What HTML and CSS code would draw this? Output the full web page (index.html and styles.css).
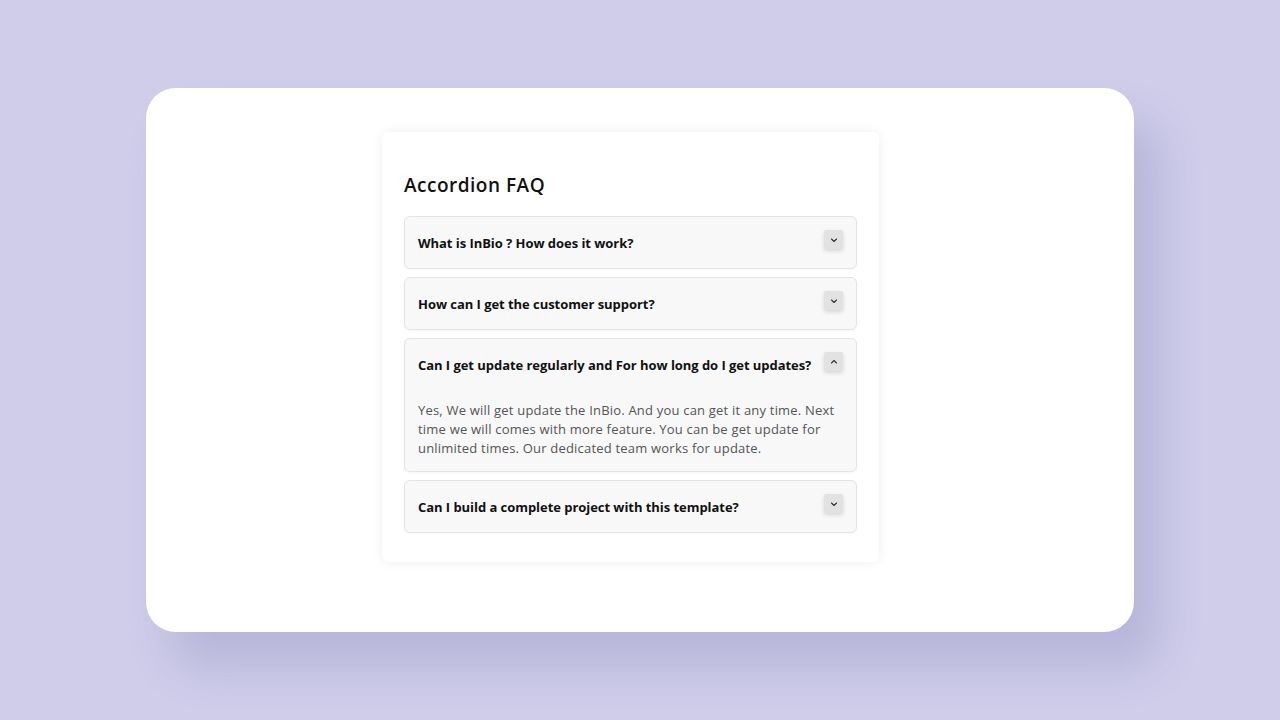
FILE: index.html
```html
<!DOCTYPE html>
<html>
<head>
<meta charset="utf-8">
<link rel="stylesheet" href="styles.css">
</head>
<body>
<div class="frame">
  <div class="faq">
    <h1 class="faq-title">Accordion FAQ</h1>
    <div class="item">
      <div class="item-head">
        <span class="q">What is InBio ? How does it work?</span>
        <span class="toggle"><svg viewBox="0 0 10 10" width="10" height="10"><path d="M2.5 4 L5 6.5 L7.5 4" fill="none" stroke="#333" stroke-width="1.1" stroke-linecap="round" stroke-linejoin="round"/></svg></span>
      </div>
    </div>
    <div class="item">
      <div class="item-head">
        <span class="q">How can I get the customer support?</span>
        <span class="toggle"><svg viewBox="0 0 10 10" width="10" height="10"><path d="M2.5 4 L5 6.5 L7.5 4" fill="none" stroke="#333" stroke-width="1.1" stroke-linecap="round" stroke-linejoin="round"/></svg></span>
      </div>
    </div>
    <div class="item open">
      <div class="item-head">
        <span class="q">Can I get update regularly and For how long do I get updates?</span>
        <span class="toggle"><svg viewBox="0 0 10 10" width="10" height="10"><path d="M2.5 6 L5 3.5 L7.5 6" fill="none" stroke="#333" stroke-width="1.1" stroke-linecap="round" stroke-linejoin="round"/></svg></span>
      </div>
      <p class="answer">Yes, We will get update the InBio. And you can get it any time. Next time we will comes with more feature. You can be get update for unlimited times. Our dedicated team works for update.</p>
    </div>
    <div class="item">
      <div class="item-head">
        <span class="q">Can I build a complete project with this template?</span>
        <span class="toggle"><svg viewBox="0 0 10 10" width="10" height="10"><path d="M2.5 4 L5 6.5 L7.5 4" fill="none" stroke="#333" stroke-width="1.1" stroke-linecap="round" stroke-linejoin="round"/></svg></span>
      </div>
    </div>
  </div>
</div>
</body>
</html>
```
FILE: styles.css
```css
html, body {
  margin: 0;
  padding: 0;
}
body {
  background: #cfcdea;
  font-family: "Open Sans", "Liberation Sans", sans-serif;
  width: 1280px;
  height: 720px;
  overflow: hidden;
  padding-top: 88px;
  box-sizing: border-box;
}
.frame {
  margin-left: 146px;
  width: 988px;
  height: 544px;
  box-sizing: border-box;
  background: #ffffff;
  border-radius: 30px;
  box-shadow: 25px 35px 45px rgba(80, 76, 140, 0.18);
  padding: 44px 0 0 236px;
}
.faq {
  width: 497px;
  height: 430px;
  box-sizing: border-box;
  background: #fff;
  border-radius: 6px;
  box-shadow: 0 0 12px rgba(0, 0, 0, 0.07);
  padding: 22px 22px;
  display: flex;
  flex-direction: column;
  gap: 8px;
}
.faq-title {
  margin: 16px 0 8px;
  font-size: 19px;
  line-height: 30px;
  font-weight: 600;
  color: #111;
  letter-spacing: 0.5px;
}
.item {
  background: #f8f8f8;
  border: 1px solid #e4e4e4;
  border-radius: 6px;
  box-shadow: 0 1px 3px rgba(0, 0, 0, 0.04);
}
.item-head {
  display: flex;
  justify-content: space-between;
  align-items: flex-start;
  padding: 16px 13px 15px;
}
.q {
  font-size: 13px;
  line-height: 20px;
  font-weight: 700;
  color: #111;
  letter-spacing: -0.05px;
}
.toggle {
  width: 19px;
  height: 19px;
  margin-top: -3px;
  background: #e2e2e2;
  border-radius: 2px;
  box-shadow: 0 2px 4px rgba(0, 0, 0, 0.14);
  display: flex;
  align-items: center;
  justify-content: center;
}
.answer {
  margin: 0;
  padding: 11px 13px 13px;
  font-size: 13px;
  line-height: 19px;
  color: #555;
  letter-spacing: 0.2px;
}
```
